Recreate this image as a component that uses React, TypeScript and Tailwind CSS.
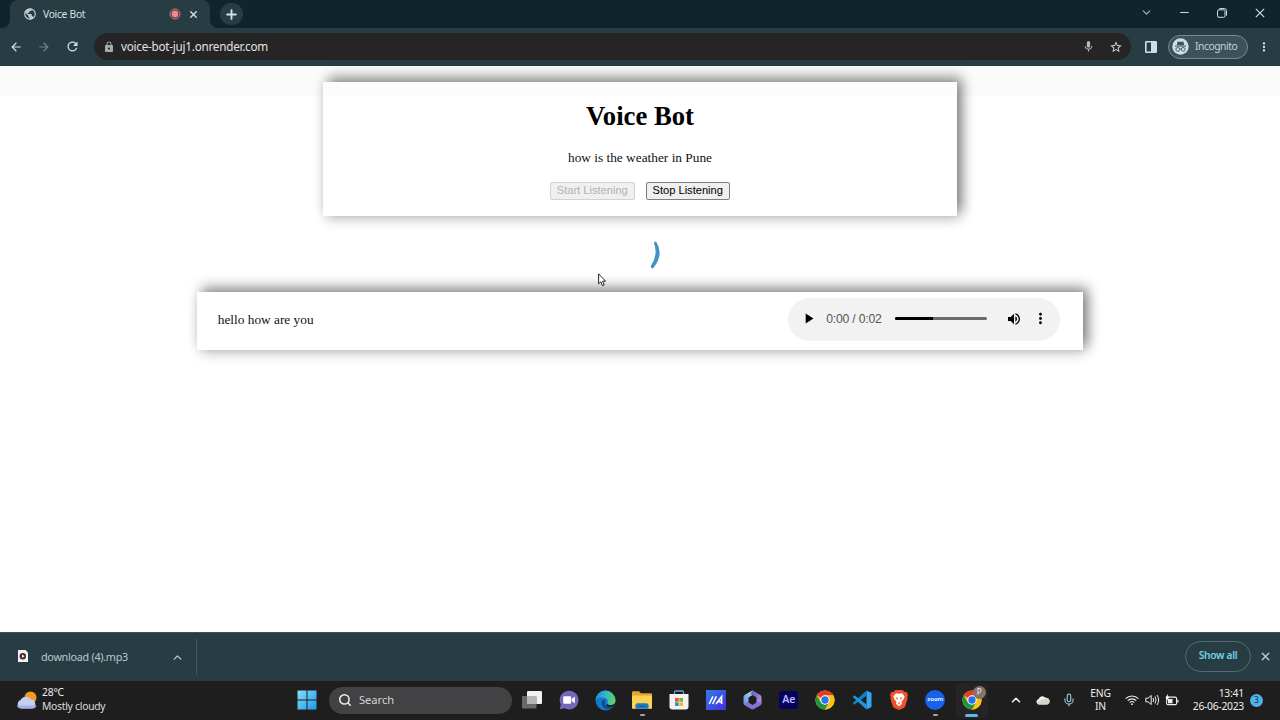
import type { ReactNode } from 'react';
import {
  MdArrowBack,
  MdArrowForward,
  MdLock,
  MdMic,
  MdMoreVert,
  MdPlayArrow,
  MdPublic,
  MdRefresh,
  MdStarBorder,
  MdVolumeUp,
} from 'react-icons/md';
import { ChevronDown, ChevronUp, Mic, Minus, Plus, Search, X } from 'lucide-react';

interface CellProps {
  className: string;
  children: ReactNode;
}

// Centers an icon inside a fixed-width slot
const Cell: React.FC<CellProps> = ({ className, children }) => (
  <div className={`flex items-center justify-center shrink-0 ${className}`}>{children}</div>
);

const TabStrip = () => (
  <div className="flex h-7 bg-[#10242b] text-[#d5e0e3]">
    <div className="w-[10px] bg-[#283c43] shrink-0">
      <div className="h-full bg-[#10242b] rounded-br-lg" />
    </div>
    <div className="flex items-center w-[200px] h-7 bg-[#283c43] rounded-t-lg shrink-0">
      <Cell className="w-[39px]">
        <MdPublic className="w-[14px] h-[14px] text-[#c0c9cc]" />
      </Cell>
      <span className="w-[116px] -ml-[6px] text-[10.3px] leading-[14px] tracking-[-0.3px] whitespace-nowrap">Voice Bot</span>
      <Cell className="w-[32px]">
        <svg width="12" height="12" viewBox="0 0 12 12">
          <circle cx="6" cy="6" r="5" fill="none" stroke="#d8767d" strokeWidth="1" />
          <circle cx="6" cy="6" r="3.4" fill="#ee8a90" />
        </svg>
      </Cell>
      <Cell className="w-[5px]">
        <X className="w-[11px] h-[11px] shrink-0" strokeWidth={3} />
      </Cell>
    </div>
    <div className="w-[10px] bg-[#283c43] shrink-0">
      <div className="h-full bg-[#10242b] rounded-bl-lg" />
    </div>
    <div className="flex items-center">
      <Cell className="w-[23px] h-[22px] rounded-full bg-[#283c43]">
        <Plus className="w-[15px] h-[15px]" strokeWidth={3} />
      </Cell>
    </div>
    <div className="flex ml-auto mr-px h-[25px]">
      <Cell className="w-[38px]">
        <ChevronDown className="w-[13px] h-[13px] text-[#a9b6ba]" strokeWidth={2} />
      </Cell>
      <Cell className="w-[38px]">
        <Minus className="w-[13px] h-[13px]" strokeWidth={2} />
      </Cell>
      <Cell className="w-[38px]">
        <svg width="10" height="10" viewBox="0 0 10 10" fill="none" stroke="currentColor" strokeWidth="1">
          <rect x="0.5" y="1.8" width="7.5" height="7.5" rx="1.5" />
          <path d="M2.3 0.6h5.2a2 2 0 0 1 2 2v5" />
        </svg>
      </Cell>
      <Cell className="w-[38px]">
        <svg width="10" height="10" viewBox="0 0 10 10" fill="none" stroke="currentColor" strokeWidth="1.1">
          <path d="M.8.8l8.4 8.4M9.2.8L.8 9.2" />
        </svg>
      </Cell>
    </div>
  </div>
);

const Toolbar = () => (
  <div className="flex items-center h-[38px] pl-[2px] pb-px bg-[#283c43] text-[#d3dee1]">
    <Cell className="w-7">
      <MdArrowBack className="w-[14px] h-[14px]" />
    </Cell>
    <Cell className="w-7">
      <MdArrowForward className="w-[14px] h-[14px] text-[#71838a]" />
    </Cell>
    <Cell className="w-7">
      <MdRefresh className="w-[15px] h-[15px]" />
    </Cell>
    <div className="flex items-center ml-2 w-[1037px] h-[27px] rounded-full bg-[#252526] shrink-0">
      <Cell className="w-[27px] pl-[2px]">
        <MdLock className="w-[12px] h-[12px] text-[#a8abac]" />
      </Cell>
      <span className="pb-[2px] text-[11.7px] leading-4 tracking-[-0.24px] text-[#e2e2e2] whitespace-nowrap">
        voice-bot-juj1.onrender.com
      </span>
      <Cell className="w-[27px] ml-auto">
        <MdMic className="w-[13px] h-[13px] text-[#b9bcbd]" />
      </Cell>
      <Cell className="w-[27px] mr-[2px]">
        <MdStarBorder className="w-[14px] h-[14px] text-[#cdd0d1]" />
      </Cell>
    </div>
    <Cell className="w-[32px] ml-1">
      <svg width="12" height="12" viewBox="0 0 12 12">
        <rect x="0.8" y="0.8" width="10.4" height="10.4" rx="0.5" fill="none" stroke="#cfdfe3" strokeWidth="1.6" />
        <rect x="6" y="0.8" width="5.2" height="10.4" fill="#cfdfe3" />
      </svg>
    </Cell>
    <div className="flex items-center w-[80px] h-[24px] ml-[1px] pl-[3px] rounded-full border border-[#768a91] bg-[#3c525a] shrink-0">
      <svg width="17" height="17" viewBox="0 0 17 17" className="shrink-0">
        <circle cx="8.5" cy="8.5" r="8.2" fill="#cfe0e4" />
        <g fill="#3c525a">
          <path d="M5.7 3.4q2.8 .7 5.6 0l1 3.8H4.7z" />
          <rect x="3" y="7.6" width="11" height="1" />
        </g>
        <g fill="none" stroke="#3c525a" strokeWidth="0.9">
          <circle cx="5.8" cy="11.4" r="1.9" />
          <circle cx="11.2" cy="11.4" r="1.9" />
          <path d="M7.7 11.2q.8-.5 1.6 0" />
        </g>
      </svg>
      <span className="ml-[6px] pb-[2px] text-[10.3px] leading-4 tracking-[-0.45px] text-[#c3d2d6]">Incognito</span>
    </div>
    <Cell className="w-[32px]">
      <MdMoreVert className="w-[14px] h-[14px]" />
    </Cell>
  </div>
);

const AudioPlayer = () => (
  <div className="flex items-center w-[272px] h-[43px] pb-[2px] rounded-full bg-[#f2f2f3] font-['Liberation_Sans',Arial,sans-serif]">
    <MdPlayArrow className="w-[17px] h-[17px] ml-[12px] text-black" />
    <span className="ml-[9px] w-[60px] text-[12.2px] leading-[14px] tracking-[-0.2px] text-[#555] whitespace-nowrap">0:00 / 0:02</span>
    <div className="w-[92px] h-[3px] ml-[9px] rounded-full bg-[#6b6b6b] overflow-hidden">
      <div className="w-[38px] h-full bg-black" />
    </div>
    <MdVolumeUp className="w-[16px] h-[16px] ml-[19px] text-black" />
    <MdMoreVert className="w-[17px] h-[17px] ml-[10px] text-black" />
  </div>
);

const PageContent = () => (
  <main className="relative h-[566px] pt-[16px] bg-white bg-linear-to-b from-[#fbfbfc] from-[30px] to-white to-[30px] font-['Liberation_Serif','Times_New_Roman',serif] text-[#111]">
    <section className="flex flex-col items-center w-[634px] h-[134px] mx-auto bg-white bg-linear-to-b from-[#fcfcfc] from-[14px] to-white to-[14px] shadow-[5px_-5px_12px_rgba(0,0,0,0.42),3px_4px_12px_rgba(0,0,0,0.18)]">
      <h1 className="mt-[19px] text-[26.67px] leading-[31px] font-bold text-black">Voice Bot</h1>
      <p className="mt-[18px] text-[13.33px] leading-4">how is the weather in Pune</p>
      <div className="flex gap-[11px] mt-[16px] font-['Liberation_Sans',Arial,sans-serif] text-[11.11px] leading-[14px]">
        <button disabled className="flex items-center justify-center w-[84.5px] h-[18px] pb-[2px] rounded-[2px] border border-[#d2d2d2] bg-[#f0f0f0] text-[#b0b0b0] whitespace-nowrap">
          Start Listening
        </button>
        <button className="flex items-center justify-center w-[84.5px] h-[18px] pb-[2px] rounded-[2px] border border-[#808080] bg-[#efefef] text-black whitespace-nowrap">
          Stop Listening
        </button>
      </div>
    </section>

    {/* Loading spinner */}
    <div className="flex justify-center mt-[16px] h-[40px]">
      <svg width="40" height="40" viewBox="0 0 40 40" className="ml-[2px]">
        <path
          d="M35.5 10.2Q43 22.5 32.6 35.8Q30.4 37.4 29.6 34.6Q37.500 22.5 33 11.2Q33.4 8.4 35.5 10.2Z"
          fill="#4292c6"
        />
      </svg>
    </div>

    <section className="flex items-center justify-between w-[886.5px] h-[58px] mt-[20px] mx-auto pl-[21px] pr-[23px] bg-white shadow-[5px_-5px_12px_rgba(0,0,0,0.42),3px_4px_12px_rgba(0,0,0,0.18)]">
      <p className="text-[13.33px] leading-4 pb-[2px]">hello how are you</p>
      <div className="pb-[3px]">
        <AudioPlayer />
      </div>
    </section>

    {/* Mouse pointer */}
    <svg width="9" height="14" viewBox="0 0 9 14" className="absolute left-[598px] top-[207px]">
      <path d="M.6.8v10l2.2-2 1.6 3.8 1.8-.8-1.6-3.6h3z" fill="#fff" stroke="#111" strokeWidth="0.9" />
    </svg>
  </main>
);

const DownloadBar = () => (
  <div className="flex items-center h-[49px] bg-[#283c43] border-t border-[#3d5056] text-[#b9c8cc]">
    <svg width="10" height="12" viewBox="0 0 10 12" className="ml-[18px] -mt-[2px]">
      <path d="M0 0h7.5L10 2.5V12H0z" fill="#f4f1f1" />
      <circle cx="4.8" cy="6.2" r="3.2" fill="#4b2a2c" />
      <path d="M4 4.6l2.6 1.6L4 7.8z" fill="#fff" />
    </svg>
    <span className="ml-[13px] w-[130px] text-[10.8px] leading-4 tracking-[-0.28px]">download (4).mp3</span>
    <Cell className="w-[13px]">
      <ChevronUp className="w-[13px] h-[13px] shrink-0" strokeWidth={2.5} />
    </Cell>
    <div className="ml-[12px] w-px h-[36px] bg-[#43575e]" />
    <button className="ml-auto w-[66px] h-[31px] -mt-[2px] rounded-full border border-[#566a71] text-[10.2px] font-semibold tracking-[-0.3px] text-[#72d0e6]">
      Show all
    </button>
    <Cell className="w-[29px] -mt-[2px]">
      <X className="w-[13px] h-[13px]" strokeWidth={2.6} />
    </Cell>
  </div>
);

const ChromeLogo = () => (
  <svg width="20" height="20" viewBox="0 0 48 48">
    <circle cx="24" cy="24" r="23" fill="#fbc116" />
    <path d="M24 24L4.1 12.5A23 23 0 0 1 43.9 12.5H24z" fill="#e33b2e" />
    <path d="M4.1 12.5A23 23 0 0 0 24 47l10-17.3L24 24l-10 5.7z" fill="#229342" />
    <path d="M43.9 12.5A23 23 0 0 1 24 47l10-17.3A11.5 11.5 0 0 0 24 12.5z" fill="#fbc116" />
    <circle cx="24" cy="24" r="11.3" fill="#fff" />
    <circle cx="24" cy="24" r="8.8" fill="#2a72e8" />
  </svg>
);

const TaskViewIcon = () => (
  <svg width="20" height="20" viewBox="0 0 20 20">
    <rect x="5" y="1" width="15" height="13" rx="1" fill="#f1f1f1" />
    <rect x="0" y="6" width="14.5" height="12.5" rx="1" fill="#777" fillOpacity="0.85" />
    <rect x="5" y="6" width="9.5" height="8" fill="#b5b5b5" />
  </svg>
);

const ChatIcon = () => (
  <svg width="20" height="20" viewBox="0 0 20 20">
    <path d="M10 .8a9.3 9.3 0 1 1-4.4 17.4L.8 19.2l1-4.6A9.3 9.3 0 0 1 10 .8z" fill="#7468bd" />
    <rect x="4.2" y="6.2" width="8" height="7.6" rx="1.2" fill="#fff" />
    <path d="M12.8 9l3-2.4v6.8l-3-2.4z" fill="#fff" />
  </svg>
);

const EdgeIcon = () => (
  <svg width="21" height="21" viewBox="0 0 21 21">
    <defs>
      <linearGradient id="edgeTop" x1="0" y1="0.3" x2="1" y2="0.5">
        <stop offset="0" stopColor="#1c86d6" />
        <stop offset="0.5" stopColor="#35b8d0" />
        <stop offset="1" stopColor="#62d25a" />
      </linearGradient>
    </defs>
    <circle cx="10.5" cy="10.5" r="10" fill="#1576ca" />
    <path d="M.5 10.5a10 10 0 0 1 20 0c0 3-2.4 4.6-5 4.6-2 0-3.6-.8-3.2-1.8 1.6-2.4-.2-5.8-3.8-5.8C4.4 7.5 1.2 8.2.5 10.5z" fill="url(#edgeTop)" />
    <path d="M8 9.5c-3 3-.6 9.6 5 9.5 2.4 0 4.6-1.3 5.6-2.7-4.6 2-8.8.4-8.8-3.6 0-1.2.6-2 .6-2z" fill="#0c4a92" />
    <path d="M12.3 13.3c-.4 1 1.2 1.8 3.2 1.8 1.5 0 3-.4 4-1.6l-.6 2.6q-5 2.2-7.6-.4z" fill="#1f1e1e" />
  </svg>
);

const FolderIcon = () => (
  <svg width="20" height="20" viewBox="0 0 20 20">
    <path d="M0 2.2q0-1 1-1h6l2 2H19q1 0 1 1v13.3q0 1-1 1H1q-1 0-1-1z" fill="#e2a52a" />
    <path d="M0 5.5h20v12.3q0 1-1 1H1q-1 0-1-1z" fill="#fbd253" />
    <path d="M3.5 18.8v-3.6q0-2 2-2h9q2 0 2 2v3.6z" fill="#1a7cc4" />
    <path d="M6.5 16.3h7" stroke="#125a96" strokeWidth="1" />
  </svg>
);

const StoreIcon = () => (
  <svg width="20" height="20" viewBox="0 0 20 20">
    <path d="M5.5 5V2.2q0-1.2 1.2-1.2h6.6q1.2 0 1.2 1.2V5" fill="none" stroke="#55a8d4" strokeWidth="1.3" />
    <path d="M.5 4h19v12.5q0 3-3 3h-13q-3 0-3-3z" fill="#f3f3f3" />
    <rect x="6" y="8" width="3.7" height="3.7" fill="#e5582f" />
    <rect x="10.3" y="8" width="3.7" height="3.7" fill="#79b32b" />
    <rect x="6" y="12.3" width="3.7" height="3.7" fill="#2698d9" />
    <rect x="10.3" y="12.3" width="3.7" height="3.7" fill="#f5b81f" />
  </svg>
);

const MyAsusIcon = () => (
  <svg width="20" height="20" viewBox="0 0 20 20">
    <defs>
      <linearGradient id="asus" x1="0" y1="0" x2="1" y2="1">
        <stop offset="0" stopColor="#2f7de6" />
        <stop offset="1" stopColor="#4a2ce0" />
      </linearGradient>
    </defs>
    <rect width="20" height="20" fill="url(#asus)" />
    <path d="M3.2 14L7 6.400M6.6 14l3.800-7.600M10 14L15.600 6.600V14M12.500 11.600h3" fill="none" stroke="#fff" strokeWidth="1.6" />
  </svg>
);

const OfficeIcon = () => (
  <svg width="19" height="20" viewBox="0 0 19 20">
    <defs>
      <linearGradient id="officeLeft" x1="1" y1="0" x2="0" y2="1">
        <stop offset="0" stopColor="#c4e4f7" />
        <stop offset="1" stopColor="#5a93dc" />
      </linearGradient>
      <linearGradient id="officeRight" x1="0" y1="0" x2="1" y2="1">
        <stop offset="0" stopColor="#4f5cb8" />
        <stop offset="1" stopColor="#c9a0ee" />
      </linearGradient>
    </defs>
    <path d="M9.5.5L2 4.7Q.5 5.6.5 7.3v6q0 1 .8 1.6l4.4-2.600V7.400L12 3.800V2z" fill="url(#officeLeft)" />
    <path d="M9.5.5l7.500 4.200q1.5.9 1.5 2.6v5.400q0 1.700-1.500 2.600l-3.700 2.100V7.400L7.500 4z" fill="url(#officeRight)" />
    <path d="M.8 14q.3 1 1.200 1.500l6 3.500q1.5.8 3 0l6-3.500q1.500-.9 1.500-2.600l-.4-1.400-4.800 1L9.500 14.700 5.700 12.300z" fill="#8a6fd0" />
    <path d="M5.700 7.400l3.800-2.200 3.800 2.200v5.100l-3.800 2.200-3.800-2.200z" fill="#1f1e1e" />
  </svg>
);

const VsCodeIcon = () => (
  <svg width="20" height="20" viewBox="0 0 20 20">
    <path d="M14.5.5L19.5 3v14l-5 2.5z" fill="#35a7ef" />
    <path d="M14.5.5L.8 13l1.6 1.8L14.7 5.5z" fill="#1480c6" />
    <path d="M14.5 19.5L.8 7l1.6-1.8 12.3 9.3z" fill="#2294dc" />
  </svg>
);

const BraveIcon = () => (
  <svg width="18" height="20" viewBox="0 0 18 20">
    <path d="M5.5 0h7l2 2 2-.2L18 5l-.7 2 .3 1.5-2.4 7.7q-.4 1-1.5 1.7L9 20l-4.7-2.1q-1.1-.7-1.5-1.7L.4 8.5.7 7 0 5l1.5-3.2 2 .2z" fill="#f0512b" />
    <path d="M9 3.8l3-.5 2.6 3-.8 2.7-2.3 2.8.5 2L9 16.4l-3-2.6.5-2L4.2 9l-.8-2.7 2.6-3z" fill="#fff" />
    <path d="M5.3 7l2.5.9-.5 2zM12.7 7l-2.5.9.5 2zM7.6 13L9 12.2l1.4.8L9 14z" fill="#f0512b" />
  </svg>
);

const taskbarApps: { name: string; icon: ReactNode; running?: boolean }[] = [
  { name: 'task-view', icon: <TaskViewIcon /> },
  { name: 'chat', icon: <ChatIcon /> },
  { name: 'edge', icon: <EdgeIcon /> },
  { name: 'explorer', icon: <FolderIcon />, running: true },
  { name: 'store', icon: <StoreIcon /> },
  { name: 'myasus', icon: <MyAsusIcon /> },
  { name: 'office', icon: <OfficeIcon /> },
  {
    name: 'after-effects',
    icon: (
      <div className="w-[19px] h-[18px] rounded-[3px] bg-[#04045c] text-center text-[10.5px] leading-[16px] font-semibold text-[#c0b4ff]">
        Ae
      </div>
    ),
  },
  { name: 'chrome', icon: <ChromeLogo /> },
  { name: 'vscode', icon: <VsCodeIcon /> },
  { name: 'brave', icon: <BraveIcon /> },
  {
    name: 'zoom',
    icon: (
      <div className="w-[20px] h-[20px] rounded-full bg-[#1661ee] text-center text-[6px] leading-[18px] font-semibold text-white">
        zoom
      </div>
    ),
    running: true,
  },
];

const Taskbar = () => (
  <div className="flex h-[39px] bg-[#1f1e1e] text-[#eee]">
    {/* Weather widget */}
    <div className="flex w-[297px] pl-[16px] shrink-0">
      <svg width="22" height="18" viewBox="0 0 22 18" className="mt-[10px]">
        <circle cx="14.5" cy="6.5" r="6" fill="#f59a23" />
        <path d="M5 17.5A4.5 4.5 0 0 1 4.5 9 6 6 0 0 1 15 8.5a4.7 4.7 0 0 1 1.5 9z" fill="#c4cdf2" />
        <path d="M.8 14.5q1 3 4.2 3h11.5q3.2-.2 4-3z" fill="#a4b1e6" />
      </svg>
      <div className="ml-[4px] mt-[5px] text-[10.3px] leading-[13.5px] tracking-[-0.2px]">
        <div>28°C</div>
        <div className="tracking-[-0.25px] text-[#dcdcdc]">Mostly cloudy</div>
      </div>
    </div>

    <div className="w-[20px] mt-[9px] shrink-0">
      <svg width="20" height="20" viewBox="0 0 20 20">
        <defs>
          <linearGradient id="win" x1="0" y1="0" x2="1" y2="1">
            <stop offset="0" stopColor="#83dcfb" />
            <stop offset="1" stopColor="#1f9be8" />
          </linearGradient>
        </defs>
        <path d="M.5.5h9v9h-9zM10.5.5h9v9h-9zM.5 10.5h9v9h-9zM10.5 10.5h9v9h-9z" fill="url(#win)" />
      </svg>
    </div>
    <div className="flex items-center w-[183px] h-[27px] ml-[12px] mt-[6px] pl-[9px] pb-px rounded-full bg-[#424143] shrink-0">
      <Search className="w-[14px] h-[14px] text-[#eee]" strokeWidth={2.6} />
      <span className="ml-[7px] text-[11.2px] leading-4 tracking-[-0.05px] text-[#d4d4d4]">Search</span>
    </div>

    <div className="flex ml-[2px] shrink-0">
      {taskbarApps.map((app) => (
        <div key={app.name} className="flex flex-col items-center w-[36.65px] pt-[9px]">
          <div className="flex items-center h-[20px]">{app.icon}</div>
          {app.running && <div className="w-[5px] h-[2px] mt-[4px] rounded-full bg-[#a5a5a5]" />}
        </div>
      ))}
      {/* Active chrome window with profile badge */}
      <div className="relative flex flex-col items-center w-[32px] h-[35px] ml-[2px] mt-[2px] pt-[7px] rounded-[3px] bg-[#252424]">
        <ChromeLogo />
        <div className="w-[13px] h-[3px] mt-[4px] rounded-full bg-[#5fb8e6]" />
        <div className="absolute right-[2px] top-[3px] w-[13px] h-[13px] rounded-full bg-[#86736c] text-center text-[8px] leading-[12px] text-[#eee]">
          P
        </div>
      </div>
    </div>

    {/* System tray */}
    <div className="flex ml-auto items-center pb-px">
      <Cell className="w-[26px]">
        <ChevronUp className="w-[14px] h-[14px]" strokeWidth={2.8} />
      </Cell>
      <Cell className="w-[27px]">
        <svg width="14" height="10" viewBox="0 0 14 10">
          <path d="M3 9.5A2.8 2.8 0 0 1 2.6 4 4 4 0 0 1 9.6 2.8 3.5 3.5 0 0 1 11.5 9.5z" fill="#f1efe9" />
          <path d="M1 8q4-4 9-4.5 3.5 1 3.2 4-1 2-2.5 2H3Q1.5 9.5 1 8z" fill="#d9d4cb" />
        </svg>
      </Cell>
      <Cell className="w-[26px]">
        <Mic className="w-[14px] h-[14px] text-[#8fc0d0]" strokeWidth={2} />
      </Cell>
      <div className="w-[37px] text-center text-[10.3px] leading-[13.5px] tracking-[-0.2px]">
        <div>ENG</div>
        <div>IN</div>
      </div>
      <Cell className="w-[26px]">
        <svg width="14" height="12" viewBox="0 0 14 12" fill="none" stroke="#eee" strokeWidth="1.1">
          <path d="M.6 4.6a9 9 0 0 1 12.8 0M2.7 6.7a6 6 0 0 1 8.6 0M4.7 8.6a3.3 3.3 0 0 1 4.6 0" />
          <circle cx="7" cy="10.2" r="0.9" fill="#eee" stroke="none" />
        </svg>
      </Cell>
      <Cell className="w-[15px]">
        <svg width="15" height="12" viewBox="0 0 15 12" fill="none" stroke="#eee" strokeWidth="1">
          <path d="M.8 4.2h2.2L6.2 1.5v9L3 7.8H.8zM8 4q1.2 2 0 4M10 2.5q2.2 3.5 0 7M12 1q3.3 5 0 10" />
        </svg>
      </Cell>
      <Cell className="w-[24px]">
        <svg width="14" height="12" viewBox="0 0 14 12">
          <rect x="1.6" y="3.1" width="10" height="7.5" rx="1.4" fill="none" stroke="#eee" strokeWidth="1.1" />
          <rect x="3" y="5" width="4.5" height="4.3" fill="#eee" />
          <path d="M12.3 5.7h1.2v2.8h-1.2z" fill="#eee" />
          <path d="M2.8 0L.4 4h1.8L1.5 7l3.2-4.3H2.9z" fill="#fff" />
        </svg>
      </Cell>
      <div className="w-[60px] text-right text-[10.3px] leading-[13.5px]">
        <div className="tracking-[-0.2px]">13:41</div>
        <div className="tracking-[-0.25px] whitespace-nowrap">26-06-2023</div>
      </div>
      <div className="w-[13px] h-[13px] ml-[6px] mr-[17px] rounded-full bg-[#4fb3ea] text-center text-[8.5px] leading-[12px] text-[#12303f]">
        3
      </div>
    </div>
  </div>
);

export default function App() {
  return (
    <div className="w-[1280px] h-[720px] overflow-hidden font-['Noto_Sans','Open_Sans',sans-serif]">
      <TabStrip />
      <Toolbar />
      <PageContent />
      <DownloadBar />
      <Taskbar />
    </div>
  );
}
